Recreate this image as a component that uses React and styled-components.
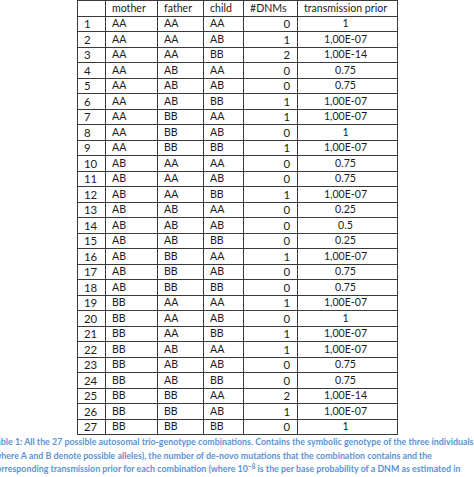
import React from 'react';
import styled, { createGlobalStyle } from 'styled-components';

const GlobalStyle = createGlobalStyle`
	html, body {
		margin: 0;
		padding: 0;
		background: #fff;
		overflow: hidden;
	}
`;

const HEADERS = ['', 'mother', 'father', 'child', '#DNMs', 'transmission prior'];

const ROWS = [
	['AA', 'AA', 'AA', 0, '1'],
	['AA', 'AA', 'AB', 1, '1,00E-07'],
	['AA', 'AA', 'BB', 2, '1,00E-14'],
	['AA', 'AB', 'AA', 0, '0.75'],
	['AA', 'AB', 'AB', 0, '0.75'],
	['AA', 'AB', 'BB', 1, '1,00E-07'],
	['AA', 'BB', 'AA', 1, '1,00E-07'],
	['AA', 'BB', 'AB', 0, '1'],
	['AA', 'BB', 'BB', 1, '1,00E-07'],
	['AB', 'AA', 'AA', 0, '0.75'],
	['AB', 'AA', 'AB', 0, '0.75'],
	['AB', 'AA', 'BB', 1, '1,00E-07'],
	['AB', 'AB', 'AA', 0, '0.25'],
	['AB', 'AB', 'AB', 0, '0.5'],
	['AB', 'AB', 'BB', 0, '0.25'],
	['AB', 'BB', 'AA', 1, '1,00E-07'],
	['AB', 'BB', 'AB', 0, '0.75'],
	['AB', 'BB', 'BB', 0, '0.75'],
	['BB', 'AA', 'AA', 1, '1,00E-07'],
	['BB', 'AA', 'AB', 0, '1'],
	['BB', 'AA', 'BB', 1, '1,00E-07'],
	['BB', 'AB', 'AA', 1, '1,00E-07'],
	['BB', 'AB', 'AB', 0, '0.75'],
	['BB', 'AB', 'BB', 0, '0.75'],
	['BB', 'BB', 'AA', 2, '1,00E-14'],
	['BB', 'BB', 'AB', 1, '1,00E-07'],
	['BB', 'BB', 'BB', 0, '1']
];

const Page = styled.div`
	display: flex;
	flex-direction: column;
	width: 474px;
	height: 477px;
	overflow: hidden;
`;

const TableWrap = styled.div`
	padding-left: 77px;
`;

const Grid = styled.div`
	display: grid;
	grid-template-columns: 28px 52px 46px 40px 54px 100px;
	grid-auto-rows: 15.5px;
	width: 321px;
	box-sizing: border-box;
	border-left: 1px solid #3a3a3a;
	border-top: 1px solid #3a3a3a;
	font-family: Lato, "Liberation Sans", sans-serif;
	font-size: 10.6px;
	color: #1c1c1c;
`;

const Cell = styled.div`
	display: flex;
	align-items: center;
	justify-content: ${p => p.$align === 'right' ? 'flex-end' : p.$align === 'center' ? 'center' : 'flex-start'};
	box-sizing: border-box;
	padding: ${p => p.$align === 'right' ? '0 7px 0 0' : p.$align === 'center' ? '0 4px 0 0' : '0 0 0 6px'};
	border-right: 1px solid #3a3a3a;
	border-bottom: 1px solid #3a3a3a;
	white-space: nowrap;
	line-height: 1;
	font-size: ${p => p.$num ? '11.4px' : 'inherit'};
`;

const Caption = styled.div`
	margin-left: -8px;
	font-family: Lato, "Liberation Sans", sans-serif;
	font-weight: 700;
	font-size: 8.85px;
	line-height: 13.6px;
	color: #5a93d6;
	white-space: nowrap;

	sup {
		font-size: 6.5px;
		line-height: 0;
		vertical-align: 3px;
	}
`;

const CaptionLine = styled.div``;

const headerAlign = i => (i === 5 ? 'center' : 'left');

export default function App() {
	return (
		<Page>
			<GlobalStyle />
			<TableWrap>
				<Grid role="table">
					{HEADERS.map((h, i) => (
						<Cell key={'h' + i} $align={headerAlign(i)}>{h}</Cell>
					))}
					{ROWS.map((row, r) => (
						<React.Fragment key={r}>
							<Cell $num>{r + 1}</Cell>
							<Cell>{row[0]}</Cell>
							<Cell>{row[1]}</Cell>
							<Cell>{row[2]}</Cell>
							<Cell $align="right" $num>{row[3]}</Cell>
							<Cell $align="center">{row[4]}</Cell>
						</React.Fragment>
					))}
				</Grid>
			</TableWrap>
			<Caption>
				<CaptionLine>Table 1: All the 27 possible autosomal trio-genotype combinations. Contains the symbolic genotype of the three individuals</CaptionLine>
				<CaptionLine>(where A and B denote possible alleles), the number of de-novo mutations that the combination contains and the</CaptionLine>
				<CaptionLine>corresponding transmission prior for each combination (where 10<sup>−8</sup> is the per base probability of a DNM as estimated in</CaptionLine>
				<CaptionLine>literature)</CaptionLine>
			</Caption>
		</Page>
	);
}
